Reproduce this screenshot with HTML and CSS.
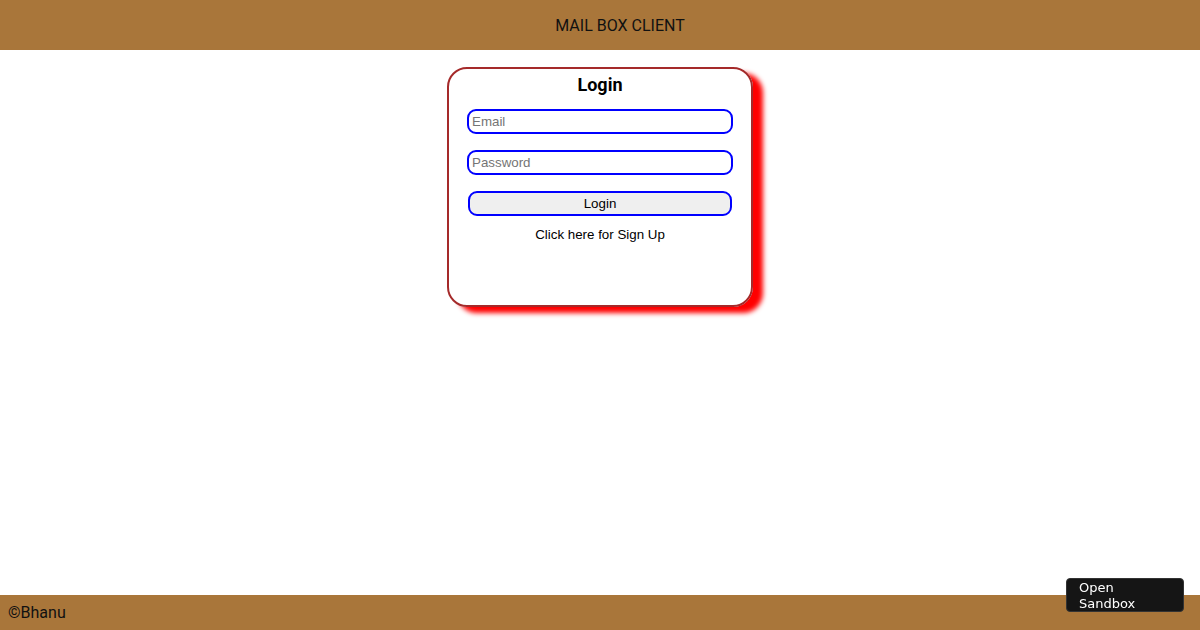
FILE: index.html
```html
<!DOCTYPE html>
<html lang="en">
<head>
  <meta charset="UTF-8">
  <title>Mail Box Client</title>
  <link rel="stylesheet" href="styles.css">
</head>
<body>
  <header class="top-bar">MAIL BOX CLIENT</header>

  <main class="content">
    <div class="login-card">
      <h2>Login</h2>
      <input type="email" class="input-box" placeholder="Email">
      <input type="password" class="input-box" placeholder="Password">
      <button class="login-btn">Login</button>
      <p class="signup-link">Click here for Sign Up</p>
    </div>
  </main>

  <footer class="bottom-bar">©Bhanu</footer>

  <a class="sandbox-btn">Open Sandbox</a>
</body>
</html>
```

FILE: styles.css
```css
html, body {
  height: 100%;
}
body {
  margin: 0;
  font-family: Roboto, "Liberation Sans", sans-serif;
  display: flex;
  flex-direction: column;
  background: white;
}
.top-bar {
  background-color: #a9763a;
  height: 50px;
  display: flex;
  justify-content: center;
  align-items: center;
  padding-left: 40px;
  font-size: 16px;
  color: #111;
}
.content {
  flex: 1;
  display: flex;
  justify-content: center;
  align-items: flex-start;
  padding-top: 17px;
}
.login-card {
  width: 266px;
  min-height: 232px;
  padding: 4px 18px 0;
  border: 2px solid #a52a2a;
  border-radius: 20px;
  box-shadow: 10px 6px 5px red;
  display: flex;
  flex-direction: column;
  align-items: stretch;
  font-family: "Liberation Sans", Arial, sans-serif;
}
.login-card h2 {
  margin: 0 0 12px;
  text-align: center;
  font-family: Roboto, sans-serif;
  font-size: 18px;
  line-height: 24px;
}
.input-box {
  box-sizing: border-box;
  height: 25px;
  margin: 0 0 16px;
  padding: 1px 3px;
  border: 2px solid blue;
  border-radius: 9px;
  font-family: "Liberation Sans", Arial, sans-serif;
  font-size: 13.333px;
  outline: none;
}
.login-btn {
  box-sizing: border-box;
  height: 25px;
  margin: 0 1px;
  border: 2px solid blue;
  border-radius: 9px;
  background-color: #efefef;
  font-family: "Liberation Sans", Arial, sans-serif;
  font-size: 13.333px;
  color: black;
  cursor: pointer;
}
.signup-link {
  margin: 10px 0 0;
  text-align: center;
  font-size: 13.333px;
  line-height: 17px;
}
.bottom-bar {
  background-color: #a9763a;
  height: 35px;
  display: flex;
  align-items: center;
  padding-left: 8px;
  font-size: 16px;
  color: #111;
}
.sandbox-btn {
  position: fixed;
  right: 16px;
  bottom: 18px;
  box-sizing: border-box;
  width: 118px;
  height: 34px;
  padding: 1px 40px 0 12px;
  background: #151515;
  border: 1px solid #333;
  border-radius: 4px;
  color: white;
  font-family: "DejaVu Sans", sans-serif;
  font-size: 13px;
  line-height: 16px;
  cursor: pointer;
}
```
